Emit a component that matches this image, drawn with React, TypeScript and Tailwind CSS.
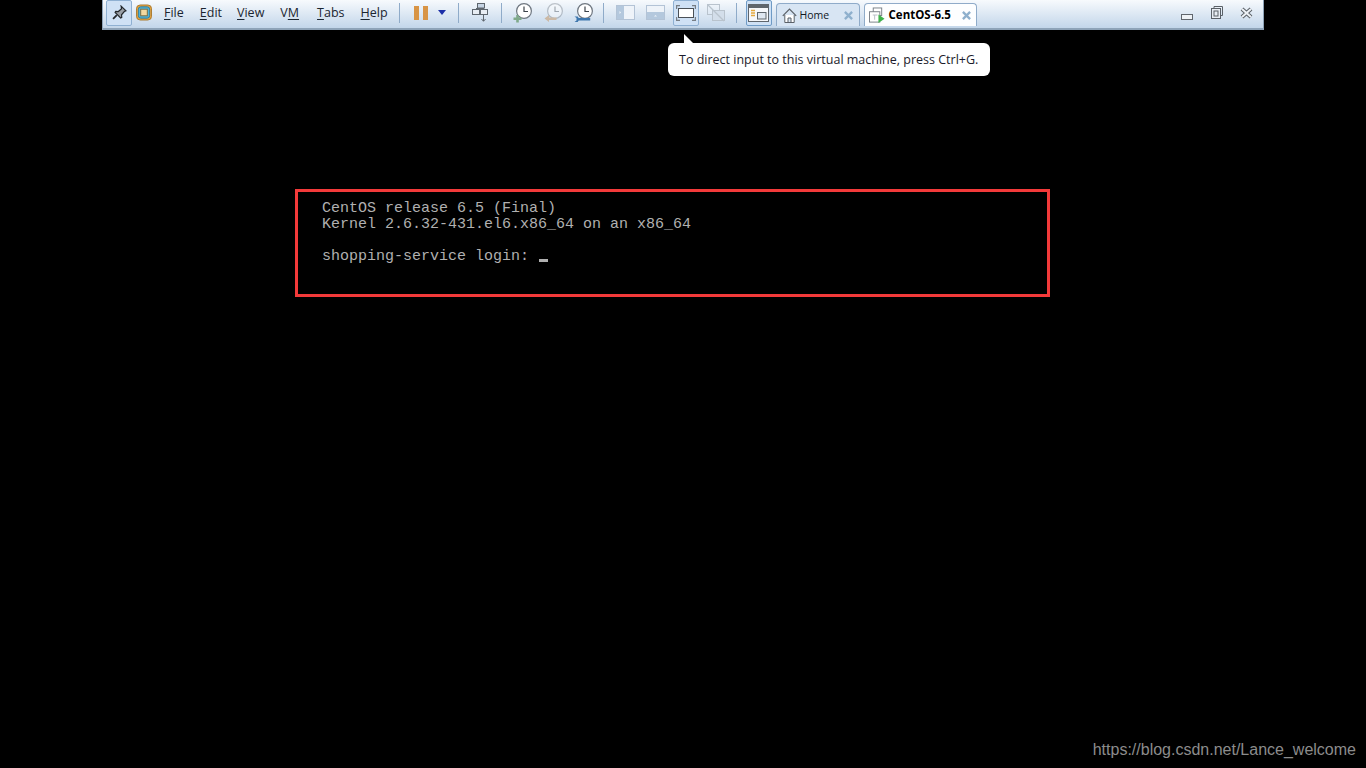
function Sep({ className }: { className: string }) {
  return <div className={`h-[20px] w-px shrink-0 bg-[#8fabc9] ${className}`} />;
}

function MenuItem({ mnemonic, rest, className }: { mnemonic: string; rest: string; className: string }) {
  return (
    <span className={`mt-[1px] shrink-0 text-[12.5px] leading-[16px] text-[#1b2530] ${className}`}>
      <span className="underline underline-offset-2">{mnemonic}</span>
      {rest}
    </span>
  );
}

function Clock({ faded }: { faded?: boolean }) {
  return (
    <g opacity={faded ? 0.4 : 1}>
      <circle cx="11" cy="8" r="7.4" fill="#fff" stroke="#6f7780" strokeWidth="1.2" />
      <path d="M11 3.5v5h4" fill="none" stroke="#3c434a" strokeWidth="1.2" />
    </g>
  );
}

function PinIcon() {
  return (
    <svg width="15" height="15" viewBox="0 0 14 14">
      <path d="M8.5 1l4.5 4.5-1.5.6-2.6 3 .2 2.4-1 .6-5.2-5.2.6-1 2.4.2 3-2.6z" fill="#9a9fa6" stroke="#23272b" strokeWidth="1.1" />
      <path d="M4.5 9.5L1 13" stroke="#23272b" strokeWidth="1.6" />
    </svg>
  );
}

function AppIcon() {
  return (
    <svg width="16" height="17" viewBox="0 0 17 17">
      <rect x="0.5" y="0.5" width="16" height="16" rx="4" fill="#e9a23b" stroke="#a8772c" />
      <rect x="2.5" y="2.5" width="12" height="12" rx="2.5" fill="#4fb3d8" stroke="#2a7d9f" />
      <rect x="5" y="5" width="7" height="7" fill="#f2d9a0" stroke="#7a6a3c" />
    </svg>
  );
}

function SendKeysIcon() {
  return (
    <svg width="17" height="20" viewBox="0 0 17 20" fill="#e8edf3" stroke="#5e666e">
      <rect x="5.5" y="0.5" width="7" height="4.5" fill="#c6d4e4" />
      <rect x="0.5" y="6.5" width="7" height="5" />
      <rect x="8.5" y="6.5" width="7" height="5" />
      <path d="M11.5 5v1.5M4 5.5h8M11.5 12v6M9.5 16l2 2.3 2-2.3" fill="none" />
    </svg>
  );
}

function SnapshotTake() {
  return (
    <svg width="19" height="20" viewBox="0 0 19 20">
      <Clock />
      <path d="M4.5 12v7.5M0.5 15.7h8" stroke="#7fa98a" strokeWidth="2.6" />
    </svg>
  );
}

function SnapshotRestore() {
  return (
    <svg width="19" height="20" viewBox="0 0 19 20">
      <Clock faded />
      <path d="M0.5 15.5l4.5-3.5v2.4h7.5v2.6H5v2z" fill="#cbb9a6" />
    </svg>
  );
}

function SnapshotManage() {
  return (
    <svg width="19" height="20" viewBox="0 0 19 20">
      <Clock />
      <path d="M0.5 13.5h3.2l1 1.5h11.5v2.5H4.7l-1 1.5H0.5l2-1.5v-2.5z" fill="#3d76ad" />
    </svg>
  );
}

function SideBarIcon() {
  return (
    <svg width="19" height="15" viewBox="0 0 19 15">
      <rect x="0.5" y="0.5" width="18" height="14" fill="#eef3f9" stroke="#b3c3d6" />
      <rect x="1" y="1" width="7" height="13" fill="#b4c8dd" />
      <path d="M3.5 6v3l1.6-1.5z" fill="#eef3f9" />
    </svg>
  );
}

function BottomBarIcon() {
  return (
    <svg width="19" height="15" viewBox="0 0 19 15">
      <rect x="0.5" y="0.5" width="18" height="14" fill="#eef3f9" stroke="#b3c3d6" />
      <rect x="1" y="7" width="17" height="7" fill="#b4c8dd" />
      <path d="M8 11.5h3l-1.5-1.6z" fill="#eef3f9" />
    </svg>
  );
}

function FullScreenIcon() {
  return (
    <svg width="20" height="16" viewBox="0 0 20 16" fill="none">
      <rect x="2.5" y="3.5" width="15" height="9" fill="#fff" stroke="#4b5157" />
      <path d="M0.5 4V0.5H4M16 0.5h3.5V4M0.5 12v3.5H4M16 15.5h3.5V12" stroke="#777e85" strokeWidth="1.4" />
    </svg>
  );
}

function UnityIcon() {
  return (
    <svg width="19" height="18" viewBox="0 0 19 18" fill="none" stroke="#b9c3cd">
      <rect x="0.5" y="0.5" width="12" height="10" />
      <rect x="5.5" y="6.5" width="12" height="10" fill="#d3deea" />
      <path d="M1 1l16 16" strokeWidth="1.2" />
    </svg>
  );
}

function TabsViewIcon() {
  return (
    <svg width="21" height="18" viewBox="0 0 21 18">
      <rect x="0.5" y="0.5" width="20" height="17" fill="#f6f8fb" stroke="#5f666d" />
      <rect x="1" y="1" width="19" height="3" fill="#5f666d" />
      <path d="M3 6.5h4M3 9h4M3 11.5h4" stroke="#e5a93f" strokeWidth="1.4" />
      <rect x="9.5" y="8.5" width="8.5" height="6.5" fill="#dfe7f0" stroke="#5f666d" />
    </svg>
  );
}

function HomeIcon() {
  return (
    <svg className="shrink-0" width="15" height="15" viewBox="0 0 15 15" fill="#fff" stroke="#5b6168">
      <path d="M0.8 7.8L7.5 1l6.7 6.8" fill="none" strokeWidth="1.2" />
      <path d="M2.8 7v7.5h9.4V7M6 14.5v-4.5h3v4.5" />
    </svg>
  );
}

function VmIcon() {
  return (
    <svg className="shrink-0" width="16" height="17" viewBox="0 0 17 17">
      <rect x="4.5" y="0.5" width="9" height="8" fill="#fff" stroke="#777e85" />
      <rect x="0.5" y="4.5" width="11" height="11" fill="#fff" stroke="#777e85" />
      <path d="M4 8h5M6 8v5" stroke="#b8bfc6" />
      <path d="M10 7.5l6.5 4.5-6.5 4.5z" fill="#3fb24a" />
    </svg>
  );
}

function TabClose({ className }: { className: string }) {
  return (
    <svg className={`shrink-0 ${className}`} width="9" height="9" viewBox="0 0 10 10">
      <path d="M1 1l8 8M9 1l-8 8" stroke="#8fb0cd" strokeWidth="2.6" />
    </svg>
  );
}

function WindowControls() {
  return (
    <div className="ml-[204px] flex shrink-0 items-center">
      <div className="mt-[9px] h-[6px] w-[12px] border border-[#60666d] bg-[#eef2f6]" />
      <svg className="ml-[18px]" width="12" height="13" viewBox="0 0 12 13" fill="none" stroke="#5a6067">
        <path d="M3 2.5V0.5h8.5v9H9.5" />
        <rect x="0.5" y="2.5" width="9" height="10" fill="#e8edf3" />
        <rect x="3" y="5" width="4" height="5" />
      </svg>
      <svg className="ml-[17px]" width="13" height="12" viewBox="0 0 13 12">
        <path d="M2 2l9 8M11 2l-9 8" stroke="#5a6067" strokeWidth="4" />
        <path d="M2 2l9 8M11 2l-9 8" stroke="#eef2f6" strokeWidth="2" />
      </svg>
    </div>
  );
}

function Toolbar() {
  return (
    <div
      className="ml-[102px] flex h-[30px] w-[1162px] items-center border-b-2 border-l border-r border-[#8ea3b8] bg-gradient-to-b from-[#f7fafd] to-[#c3d6ea] pb-[3px] font-['Open_Sans','Noto_Sans',sans-serif]"
    >
      <div className="ml-[3px] flex h-[26px] w-[26px] shrink-0 items-center justify-center rounded-[2px] border border-[#8fb0d2] bg-[#cfe1f5]">
        <PinIcon />
      </div>
      <div className="ml-[4px] shrink-0"><AppIcon /></div>
      <MenuItem mnemonic="F" rest="ile" className="ml-[12px]" />
      <MenuItem mnemonic="E" rest="dit" className="ml-[16px]" />
      <MenuItem mnemonic="V" rest="iew" className="ml-[15px]" />
      <span className="ml-[16px] mt-[1px] shrink-0 text-[12.5px] leading-[16px] text-[#1b2530]">
        V<span className="underline underline-offset-2">M</span>
      </span>
      <MenuItem mnemonic="T" rest="abs" className="ml-[18px]" />
      <MenuItem mnemonic="H" rest="elp" className="ml-[16px]" />
      <Sep className="ml-[11px]" />
      <div className="ml-[14px] flex h-[14px] shrink-0 gap-[4px]">
        <div className="w-[5px] bg-[#d89445]" />
        <div className="w-[5px] bg-[#d89445]" />
      </div>
      <svg className="ml-[10px] shrink-0" width="8" height="5" viewBox="0 0 8 5">
        <path d="M0 0h8L4 5z" fill="#1c2fa8" />
      </svg>
      <Sep className="ml-[12px]" />
      <div className="ml-[13px] shrink-0"><SendKeysIcon /></div>
      <Sep className="ml-[12px]" />
      <div className="ml-[11px] shrink-0"><SnapshotTake /></div>
      <div className="ml-[12px] shrink-0"><SnapshotRestore /></div>
      <div className="ml-[11px] shrink-0"><SnapshotManage /></div>
      <Sep className="ml-[10px]" />
      <div className="ml-[12px] shrink-0"><SideBarIcon /></div>
      <div className="ml-[11px] shrink-0"><BottomBarIcon /></div>
      <div className="ml-[8px] flex h-[26px] w-[26px] shrink-0 items-center justify-center rounded-[2px] border border-[#8fb0d2] bg-[#cfe1f5]">
        <FullScreenIcon />
      </div>
      <div className="ml-[8px] shrink-0"><UnityIcon /></div>
      <Sep className="ml-[10px]" />
      <div className="ml-[9px] flex h-[26px] w-[26px] shrink-0 items-center justify-center rounded-[2px] border border-[#6f9bc6] bg-[#cfe1f5]">
        <TabsViewIcon />
      </div>
      <div className="ml-[4px] -mb-[1px] flex h-[23px] w-[84px] shrink-0 items-center self-end rounded-t-[4px] border border-b-0 border-[#8fabc9] bg-[#d8e5f3] pl-[5px]">
        <HomeIcon />
        <span className="ml-[3px] text-[10.5px] leading-[14px] text-[#10181f]">Home</span>
        <TabClose className="ml-[15px]" />
      </div>
      <div className="ml-[4px] -mb-[1px] flex h-[23px] w-[113px] shrink-0 items-center self-end rounded-t-[4px] border border-b-0 border-[#8fabc9] bg-[#fdfeff] pl-[4px]">
        <VmIcon />
        <span className="ml-[4px] text-[11.5px] font-bold leading-[14px] text-black">CentOS-6.5</span>
        <TabClose className="ml-[11px]" />
      </div>
      <WindowControls />
    </div>
  );
}

function Tooltip() {
  return (
    <div className="absolute left-[668px] top-[34px]">
      <div className="ml-[16px] h-[9px] w-[9px] bg-white [clip-path:polygon(0_0,100%_100%,0_100%)]" />
      <div className="flex h-[33px] w-[322px] items-center rounded-[6px] bg-white pl-[11px] pt-[1px] font-['Open_Sans','Noto_Sans',sans-serif] text-[12.5px] text-[#1b1b2b]">
        To direct input to this virtual machine, press Ctrl+G.
      </div>
    </div>
  );
}

function Console() {
  return (
    <div className="ml-[295px] mt-[159px] h-[108px] w-[755px] border-[3px] border-[#f33a3a] pl-[24px] pt-[9px] font-['Liberation_Mono',monospace] text-[15px] leading-[16px] text-[#b0b0b0]">
      <div className="whitespace-pre">CentOS release 6.5 (Final)</div>
      <div className="whitespace-pre">Kernel 2.6.32-431.el6.x86_64 on an x86_64</div>
      <div className="h-[16px]" />
      <div className="flex whitespace-pre">
        shopping-service login: 
        <div className="ml-[10px] mt-[10px] h-[3px] w-[9px] bg-[#b0b0b0]" />
      </div>
    </div>
  );
}

export default function App() {
  return (
    <div className="relative h-[768px] w-[1366px] overflow-hidden bg-black">
      <Toolbar />
      <Console />
      <Tooltip />
      <div className="absolute bottom-[7px] right-[10px] font-['Liberation_Sans',sans-serif] text-[16px] leading-[22px] text-[#8c8c8c]">
        https://blog.csdn.net/Lance_welcome
      </div>
    </div>
  );
}
